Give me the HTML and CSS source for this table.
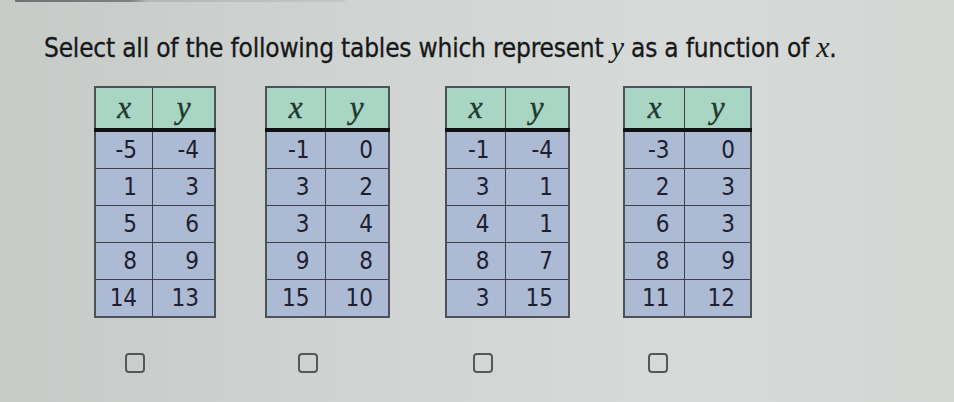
FILE: index.html
```html
<!DOCTYPE html>
<html>
<head>
<meta charset="utf-8">
<link rel="stylesheet" href="styles.css">
</head>
<body>
<div class="page">
  <div class="topline"></div>
  <p class="prompt">Select all of the following tables which represent <i class="m">y</i> as a function of <i class="m">x</i>.</p>
  <div class="choices">
    <div class="choice c1">
      <table class="ft">
        <tr><th class="cx"><i class="m">x</i></th><th><i class="m">y</i></th></tr>
        <tr><td>-5</td><td>-4</td></tr>
        <tr><td>1</td><td>3</td></tr>
        <tr><td>5</td><td>6</td></tr>
        <tr><td>8</td><td>9</td></tr>
        <tr><td>14</td><td>13</td></tr>
      </table>
      <span class="box"></span>
    </div>
    <div class="choice c2">
      <table class="ft">
        <tr><th class="cx"><i class="m">x</i></th><th><i class="m">y</i></th></tr>
        <tr><td>-1</td><td>0</td></tr>
        <tr><td>3</td><td>2</td></tr>
        <tr><td>3</td><td>4</td></tr>
        <tr><td>9</td><td>8</td></tr>
        <tr><td>15</td><td>10</td></tr>
      </table>
      <span class="box"></span>
    </div>
    <div class="choice c3">
      <table class="ft">
        <tr><th class="cx"><i class="m">x</i></th><th><i class="m">y</i></th></tr>
        <tr><td>-1</td><td>-4</td></tr>
        <tr><td>3</td><td>1</td></tr>
        <tr><td>4</td><td>1</td></tr>
        <tr><td>8</td><td>7</td></tr>
        <tr><td>3</td><td>15</td></tr>
      </table>
      <span class="box"></span>
    </div>
    <div class="choice c4">
      <table class="ft">
        <tr><th class="cx"><i class="m">x</i></th><th><i class="m">y</i></th></tr>
        <tr><td>-3</td><td>0</td></tr>
        <tr><td>2</td><td>3</td></tr>
        <tr><td>6</td><td>3</td></tr>
        <tr><td>8</td><td>9</td></tr>
        <tr><td>11</td><td>12</td></tr>
      </table>
      <span class="box"></span>
    </div>
  </div>
</div>
</body>
</html>
```
FILE: styles.css
```css
html, body {
  margin: 0;
  padding: 0;
}
body {
  width: 954px;
  height: 402px;
  overflow: hidden;
  background: linear-gradient(90deg, #c6cbc8 0%, #d0d4d2 40%, #d7dad8 72%, #d3d7d4 100%);
  font-family: "DejaVu Sans Condensed", "DejaVu Sans", sans-serif;
  color: #17181a;
}
.page {
  height: 402px;
}
.topline {
  height: 2px;
  margin-left: 15px;
  width: 330px;
  background: linear-gradient(90deg, #6f7371 0%, #7d817f 35%, #b3b7b5 40%, #c3c7c5 100%);
}
.prompt {
  margin: 30px 0 0 44px;
  font-size: 26px;
  line-height: 30px;
  letter-spacing: -0.2px;
  -webkit-text-stroke: 0.3px #17181a;
}
.m {
  font-family: "Liberation Serif", "DejaVu Serif", serif;
  font-style: italic;
  font-size: 1.15em;
  -webkit-text-stroke: 0;
}
.choices {
  display: flex;
  margin: 23px 0 0 94px;
}
.choice {
  display: flex;
  flex-direction: column;
}
.c1 { width: 122px; }
.c2 { width: 125px; margin-left: 49px; }
.c3 { width: 125px; margin-left: 55px; }
.c4 { width: 129px; margin-left: 53px; }
.ft {
  border-collapse: collapse;
  border: 2px solid #4d5258;
  width: 100%;
  font-size: 24px;
  color: #1c2030;
}
.ft th {
  height: 40px;
  padding: 0;
  background: #a8d5c4;
  border: 1px solid #3a3e40;
  border-bottom: 4px solid #0f1113;
  font-weight: normal;
  text-align: center;
  color: #1e3a2f;
  line-height: 1;
}
.ft th .m {
  font-size: 1.3em;
  -webkit-text-stroke: 0.4px #1e3a2f;
}
.ft th.cx {
  width: 48%;
}
.ft td {
  height: 36px;
  padding: 0 15px 0 0;
  background: #adbad4;
  border: 1px solid #3b404a;
  text-align: right;
  line-height: 1;
}
.box {
  width: 16px;
  height: 16px;
  margin: 35px 0 0 31px;
  border: 2px solid #54585a;
  border-radius: 4px;
}
.c2 .box { margin-left: 33px; }
.c3 .box { margin-left: 28px; }
.c4 .box { margin-left: 25px; }
```
